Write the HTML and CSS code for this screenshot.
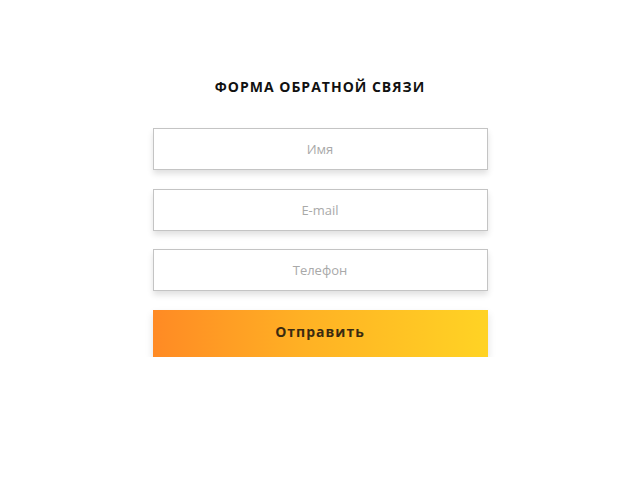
FILE: index.html
```html
<!DOCTYPE html>
<html lang="ru">
<head>
    <meta charset="UTF-8">
    <meta name="viewport" content="width=device-width, initial-scale=1.0">
    <title>Форма обратной связи</title>
    <link rel="stylesheet" href="styles.css">
</head>
<body>
    <form class="feedback">
        <h2 class="feedback-title">Форма обратной связи</h2>
        <input class="feedback-field" type="text" placeholder="Имя">
        <input class="feedback-field" type="email" placeholder="E-mail">
        <input class="feedback-field" type="tel" placeholder="Телефон">
        <button class="feedback-btn" type="submit">Отправить</button>
    </form>
</body>
</html>
```

FILE: styles.css
```css
body {
    margin: 0;
    background: #fff;
    font-family: "Open Sans", Arial, sans-serif;
}
.feedback {
    width: 335px;
    margin: 0 auto;
    padding-top: 77px;
    display: flex;
    flex-direction: column;
}
.feedback-title {
    margin: 0 0 31px;
    font-size: 14px;
    font-weight: 700;
    line-height: 20px;
    letter-spacing: 1px;
    text-transform: uppercase;
    text-align: center;
    color: #111;
}
.feedback-field {
    box-sizing: border-box;
    height: 42px;
    margin-bottom: 18.6px;
    border: 1px solid #c4c4c4;
    background: #fff;
    box-shadow: 0 4px 6px rgba(0, 0, 0, 0.12);
    font-family: inherit;
    font-size: 13px;
    text-align: center;
    outline: none;
}
.feedback-field::placeholder {
    color: #a9a9a9;
}
.feedback-btn {
    height: 47px;
    padding: 0 0 3px;
    border: none;
    background: linear-gradient(90deg, #ff8a24 0%, #ffb124 45%, #ffd324 100%);
    box-shadow: 0 4px 8px rgba(0, 0, 0, 0.12);
    font-family: inherit;
    font-size: 14px;
    font-weight: 700;
    letter-spacing: 1px;
    color: #3a2a10;
    cursor: pointer;
}
```
